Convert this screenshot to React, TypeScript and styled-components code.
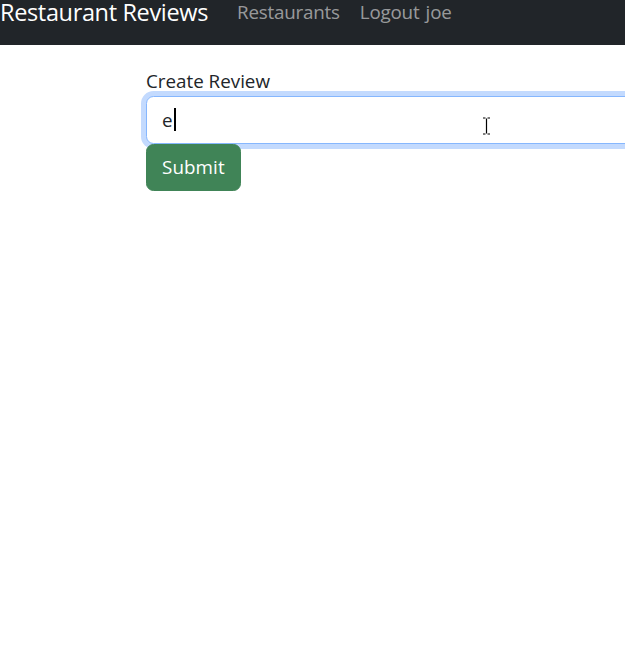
import React from "react";
import styled, { createGlobalStyle } from "styled-components";

const Global = createGlobalStyle`
  html, body { margin: 0; padding: 0; background: #fff; overflow: hidden; }
  body { font-family: "Open Sans", "Noto Sans", sans-serif; color: #212529; }
  * { box-sizing: border-box; }
`;

const Page = styled.div`
  width: 625px;
  height: 650px;
  overflow: hidden;
  position: relative;
`;

const NavBar = styled.nav`
  height: 45px;
  background: #212529;
  display: flex;
  align-items: flex-start;
  overflow: hidden;
`;

const Brand = styled.a`
  color: #fff;
  font-size: 23.5px;
  line-height: 24px;
  margin-right: 19px;
  white-space: nowrap;
  text-decoration: none;
  letter-spacing: -0.35px;
`;

const NavLinks = styled.div`
  display: flex;
`;

const NavLink = styled.a`
  color: rgba(255, 255, 255, 0.55);
  font-size: 18.8px;
  line-height: 24px;
  padding: 0 10px;
  white-space: nowrap;
  text-decoration: none;
  letter-spacing: -0.2px;
  word-spacing: 1.5px;
`;

const Content = styled.main`
  padding: 21px 0 0 146px;
  display: flex;
  flex-direction: column;
  align-items: flex-start;
`;

const Label = styled.label`
  font-size: 18.8px;
  line-height: 30px;
  color: #212529;
  letter-spacing: 0;
`;

const InputBox = styled.div`
  width: 620px;
  height: 47.5px;
  border: 1.25px solid #86b7fe;
  border-radius: 7.5px;
  box-shadow: 0 0 0 5px #c3dafe;
  padding: 7.5px 15px;
  font-size: 18.8px;
  line-height: 30px;
  color: #212529;
  display: flex;
  align-items: center;
  background: #fff;
`;

const Caret = styled.span`
  display: inline-block;
  width: 2px;
  height: 23px;
  background: #000;
  margin-left: 1px;
`;

const SubmitButton = styled.button`
  height: 47.5px;
  padding: 0 15px;
  border: 1.25px solid #408457;
  border-radius: 7.5px;
  background: #408457;
  color: #fff;
  font-family: inherit;
  font-size: 18.8px;
  line-height: 30px;
  letter-spacing: 0.1px;
  cursor: pointer;
`;

const Cursor = styled.svg`
  position: absolute;
  left: 482px;
  top: 117px;
`;

export default function App() {
  return (
    <Page>
      <Global />
      <NavBar>
        <Brand href="#">Restaurant Reviews</Brand>
        <NavLinks>
          <NavLink href="#">Restaurants</NavLink>
          <NavLink href="#">Logout joe</NavLink>
        </NavLinks>
      </NavBar>
      <Content>
        <Label>Create Review</Label>
        <InputBox>
          e<Caret />
        </InputBox>
        <SubmitButton>Submit</SubmitButton>
      </Content>
      <Cursor width="9" height="18" viewBox="0 0 9 18">
        <path d="M1 1h2.5M5.5 1H8M4.5 1.5v15M1 17h2.5M5.5 17H8" stroke="#000" strokeWidth="1.2" fill="none" />
      </Cursor>
    </Page>
  );
}
